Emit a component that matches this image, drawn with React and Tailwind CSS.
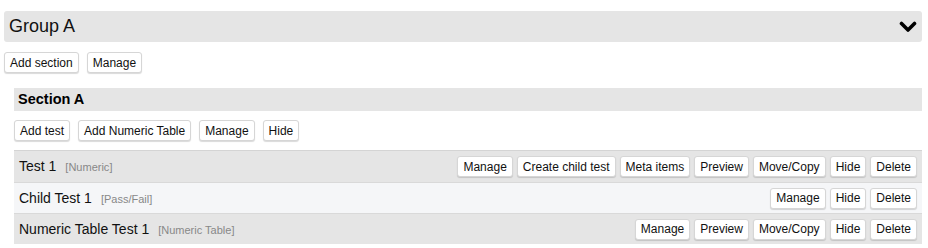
import React from 'react';

function Btn({ children }) {
    return (
        <button className="h-[21px] px-[5px] bg-white border border-[#d6d6d6] rounded-[3px] shadow-[0_1px_1px_rgba(0,0,0,0.15)] text-[12px] leading-none text-[#111] whitespace-nowrap">
            {children}
        </button>
    );
}

function TestRow({ name, type, actions, light, first }) {
    return (
        <div className={`flex items-center justify-between pl-[5px] pr-[5px] border-t ${first ? 'border-[#d4d4d4] h-[32px]' : 'border-[#d9d9d9] h-[31px]'} ${light ? 'bg-[#f5f6f8]' : 'bg-[#e5e5e5]'}`}>
            <div className="flex items-baseline">
                <span className="text-[14px] text-[#111]">{name}</span>
                <span className="ml-[9px] text-[11px] text-[#888]">[{type}]</span>
            </div>
            <div className="flex gap-[4px]">
                {actions.map(a => <Btn key={a}>{a}</Btn>)}
            </div>
        </div>
    );
}

export default function App() {
    const rows = [
        { name: 'Test 1', type: 'Numeric', actions: ['Manage', 'Create child test', 'Meta items', 'Preview', 'Move/Copy', 'Hide', 'Delete'] },
        { name: 'Child Test 1', type: 'Pass/Fail', actions: ['Manage', 'Hide', 'Delete'], light: true },
        { name: 'Numeric Table Test 1', type: 'Numeric Table', actions: ['Manage', 'Preview', 'Move/Copy', 'Hide', 'Delete'] },
    ];

    return (
        <div className="pt-[11px] pl-[4px] pr-[6px] bg-white text-[#111]" style={{ fontFamily: '"Liberation Sans", Arial, sans-serif' }}>
            <div className="h-[31px] bg-[#e5e5e5] rounded-[3px] flex items-center justify-between pl-[5px] pr-[4px]">
                <span className="text-[18px] text-[#111]">Group A</span>
                <svg width="18" height="12" viewBox="0 0 18 12" className="mr-[1px]">
                    <polyline points="2.5,2.5 9,9 15.5,2.5" fill="none" stroke="#000" strokeWidth="3.6" strokeLinecap="round" strokeLinejoin="round" />
                </svg>
            </div>
            <div className="flex gap-[8px] mt-[10px]">
                <Btn>Add section</Btn>
                <Btn>Manage</Btn>
            </div>
            <div className="ml-[10px] mt-[15px]">
                <div className="h-[23px] bg-[#e5e5e5] flex items-center pl-[4px]">
                    <span className="text-[14.5px] font-bold text-[#000]">Section A</span>
                </div>
                <div className="flex gap-[8px] mt-[9px]">
                    <Btn>Add test</Btn>
                    <Btn>Add Numeric Table</Btn>
                    <Btn>Manage</Btn>
                    <Btn>Hide</Btn>
                </div>
                <div className="mt-[9px]">
                    {rows.map((r, i) => (
                        <TestRow key={r.name} {...r} first={i === 0} />
                    ))}
                </div>
            </div>
        </div>
    );
}
